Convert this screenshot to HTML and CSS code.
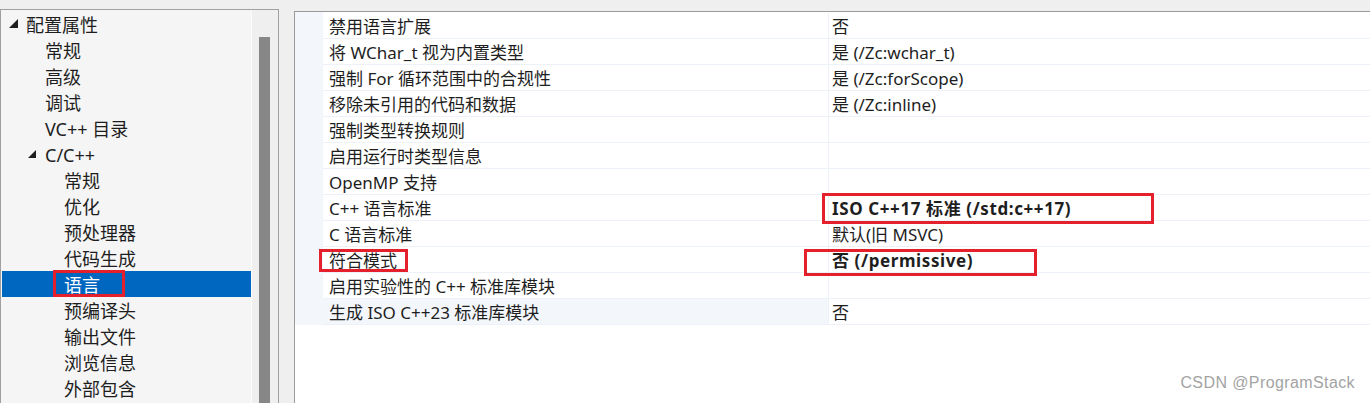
FILE: index.html
```html
<!DOCTYPE html>
<html lang="zh-CN">
<head>
<meta charset="utf-8">
<title>配置属性 - 语言</title>
<link rel="stylesheet" href="styles.css">
</head>
<body>
<div class="app">
  <aside class="tree-panel">
    <div class="tree">
      <div class="node lvl0"><span class="slot"><svg class="caret" viewBox="0 0 9 9"><polygon points="9,0 9,9 0,9"/></svg></span><span class="label">配置属性</span></div>
      <div class="node lvl1"><span class="slot"></span><span class="label">常规</span></div>
      <div class="node lvl1"><span class="slot"></span><span class="label">高级</span></div>
      <div class="node lvl1"><span class="slot"></span><span class="label">调试</span></div>
      <div class="node lvl1"><span class="slot"></span><span class="label">VC++ 目录</span></div>
      <div class="node lvl1"><span class="slot"><svg class="caret small" viewBox="0 0 9 9"><polygon points="9,0 9,9 0,9"/></svg></span><span class="label">C/C++</span></div>
      <div class="node lvl2"><span class="slot"></span><span class="label">常规</span></div>
      <div class="node lvl2"><span class="slot"></span><span class="label">优化</span></div>
      <div class="node lvl2"><span class="slot"></span><span class="label">预处理器</span></div>
      <div class="node lvl2"><span class="slot"></span><span class="label">代码生成</span></div>
      <div class="node lvl2 selected"><span class="slot"></span><span class="label">语言</span></div>
      <div class="node lvl2"><span class="slot"></span><span class="label">预编译头</span></div>
      <div class="node lvl2"><span class="slot"></span><span class="label">输出文件</span></div>
      <div class="node lvl2"><span class="slot"></span><span class="label">浏览信息</span></div>
      <div class="node lvl2"><span class="slot"></span><span class="label">外部包含</span></div>
    </div>
    <div class="vscroll"><div class="thumb"></div></div>
  </aside>

  <main class="grid-panel">
    <div class="grid">
      <div class="gutter"></div>
      <div class="rows">
        <div class="row"><div class="name">禁用语言扩展</div><div class="value">否</div></div>
        <div class="row"><div class="name">将 WChar_t 视为内置类型</div><div class="value">是 (/Zc:wchar_t)</div></div>
        <div class="row"><div class="name">强制 For 循环范围中的合规性</div><div class="value">是 (/Zc:forScope)</div></div>
        <div class="row"><div class="name">移除未引用的代码和数据</div><div class="value">是 (/Zc:inline)</div></div>
        <div class="row"><div class="name">强制类型转换规则</div><div class="value"></div></div>
        <div class="row"><div class="name">启用运行时类型信息</div><div class="value"></div></div>
        <div class="row"><div class="name">OpenMP 支持</div><div class="value"></div></div>
        <div class="row"><div class="name">C++ 语言标准</div><div class="value bold">ISO C++17 标准 (/std:c++17)</div></div>
        <div class="row"><div class="name">C 语言标准</div><div class="value">默认(旧 MSVC)</div></div>
        <div class="row"><div class="name">符合模式</div><div class="value bold">否 (/permissive)</div></div>
        <div class="row"><div class="name">启用实验性的 C++ 标准库模块</div><div class="value"></div></div>
        <div class="row active"><div class="name">生成 ISO C++23 标准库模块</div><div class="value">否</div></div>
      </div>
    </div>
  </main>
</div>

<div class="mark mark-lang"></div>
<div class="mark mark-mode"></div>
<div class="mark mark-iso"></div>
<div class="mark mark-perm"></div>

<div class="watermark">CSDN @ProgramStack</div>
</body>
</html>
```

FILE: styles.css
```css
html, body {
  margin: 0;
  padding: 0;
}

body {
  position: relative;
  width: 1370px;
  height: 403px;
  overflow: hidden;
  background: #efefef;
  font-family: "Noto Sans", "Noto Sans CJK SC", sans-serif;
  color: #1e1e1e;
}

.app {
  display: flex;
  height: 403px;
  align-items: flex-start;
  overflow: hidden;
}

/* ---------- left tree ---------- */
.tree-panel {
  display: flex;
  margin-top: 9px;
  width: 276px;
  height: 393px;
  border: 1px solid #a0a0a0;
  border-bottom: none;
  background: #f5f5f5;
  padding-left: 1px;
  overflow: hidden;
}

.tree {
  width: 249px;
  padding-top: 1px;
}

.node {
  display: flex;
  align-items: center;
  height: 26px;
  font-size: 18px;
  white-space: nowrap;
}

.label {
  line-height: 26px;
  padding-top: 2px;
  height: 26px;
  box-sizing: border-box;
  display: flex;
  align-items: center;
}

.node.lvl0 { padding-left: 5px; }
.node.lvl1 { padding-left: 24px; }
.node.lvl2 { padding-left: 43px; }

.slot {
  display: flex;
  align-items: center;
  width: 19px;
  flex: none;
  height: 26px;
}

.caret {
  width: 9px;
  height: 9px;
  margin-left: 2px;
  margin-top: -2px;
  fill: #1e1e1e;
}

.caret.small {
  width: 8px;
  height: 8px;
  margin-top: 0;
}

.node.selected {
  background: #0067c0;
  color: #ffffff;
}

.vscroll {
  width: 27px;
  box-sizing: border-box;
  border-left: 1px solid #fbfbfb;
  background: #efefef;
  padding-top: 27px;
  padding-left: 7px;
}

.thumb {
  width: 11px;
  height: 366px;
  background: #878787;
}

/* ---------- right grid ---------- */
.grid-panel {
  flex: 1;
  margin-top: 11px;
  margin-left: 15px;
  height: 391px;
  border-left: 1px solid #9a9a9a;
  border-top: 1px solid #9a9a9a;
  background: #ffffff;
}

.grid {
  display: flex;
}

.gutter {
  width: 28px;
  flex: none;
  background: #f3f6fb;
}

.rows {
  flex: 1;
  padding-top: 1px;
}

.row {
  display: flex;
  height: 26px;
  box-sizing: border-box;
  border-bottom: 1px solid #edf1f8;
  font-size: 17px;
  line-height: 25px;
  white-space: nowrap;
}

.name {
  width: 505px;
  flex: none;
  padding-left: 6px;
  padding-top: 1px;
  box-sizing: border-box;
}

.value {
  flex: 1;
  border-left: 1px solid #edf1f8;
  padding-left: 3px;
  padding-top: 1px;
}

.value.bold {
  font-weight: 700;
  letter-spacing: 0.6px;
}

.row.active .name {
  background: #f3f6fb;
}

/* ---------- annotations ---------- */
.mark {
  position: absolute;
  box-sizing: border-box;
  border: 3px solid #e3202c;
}

.mark-lang { left: 53px; top: 270px; width: 72px; height: 27px; }
.mark-mode { left: 319px; top: 249px; width: 89px; height: 23px; }
.mark-iso  { left: 822px; top: 193px; width: 332px; height: 31px; }
.mark-perm { left: 804px; top: 249px; width: 233px; height: 27px; }

.watermark {
  position: absolute;
  right: 15px;
  top: 374px;
  font-family: "Liberation Sans", Arial, sans-serif;
  font-size: 16px;
  line-height: 18px;
  letter-spacing: 0.4px;
  color: #a3a3a3;
}
```
